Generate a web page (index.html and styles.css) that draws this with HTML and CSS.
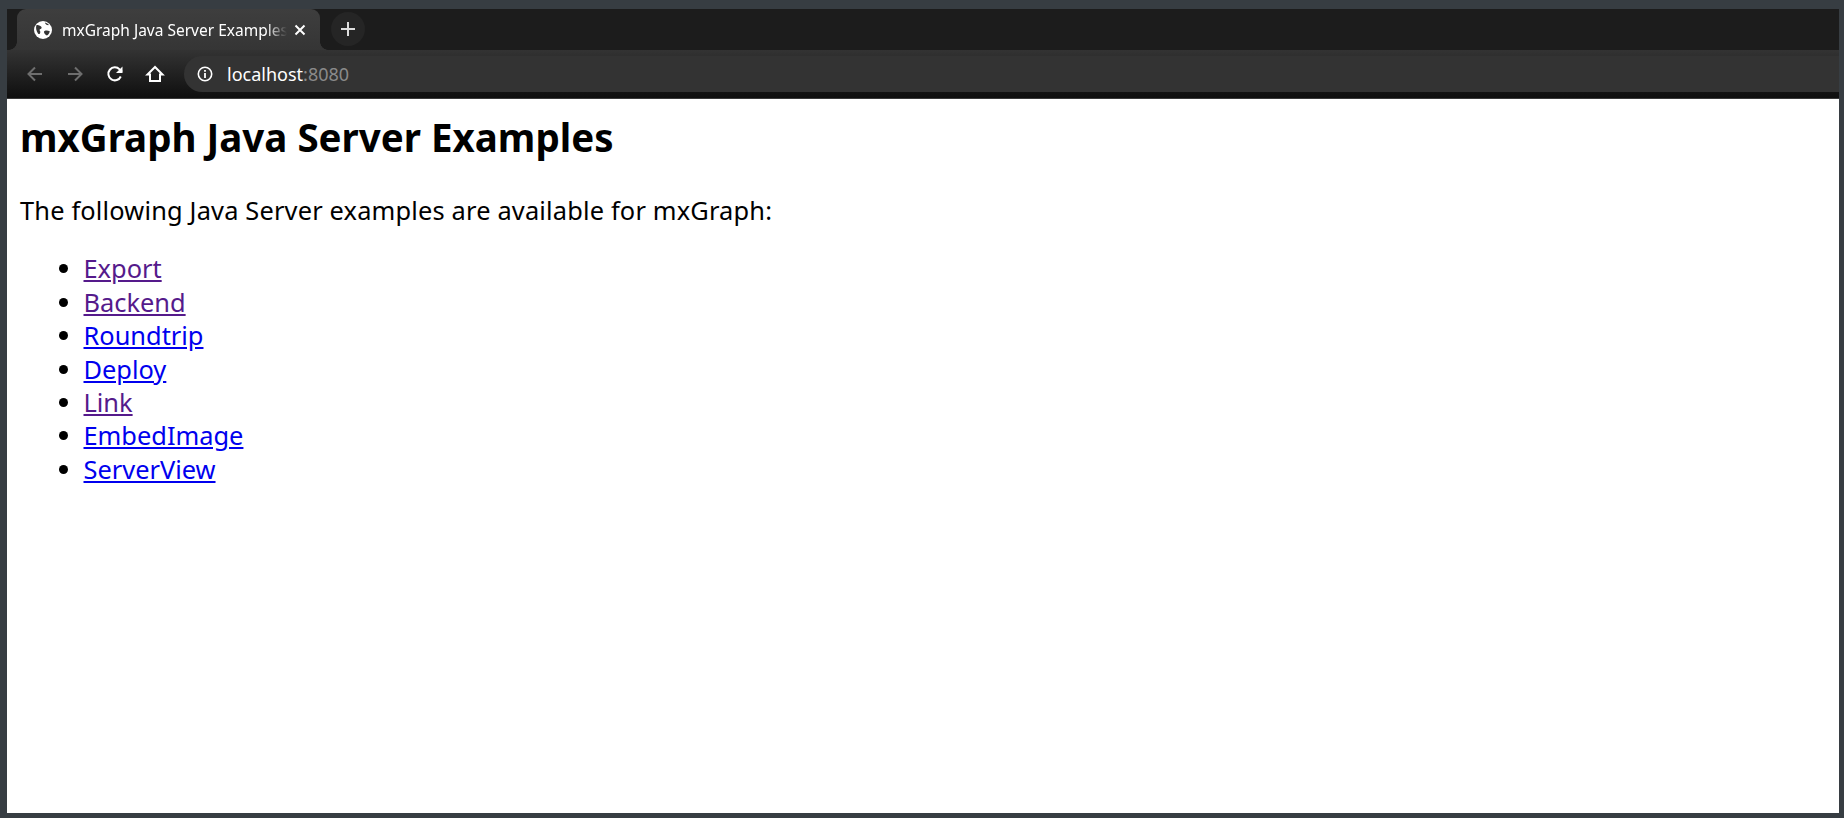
FILE: index.html
```html
<!DOCTYPE html>
<html lang="en">
  <head>
    <meta charset="UTF-8" />
    <title>mxGraph Java Server Examples</title>
    <link rel="stylesheet" href="styles.css">
  </head>
  <body>
    <div class="frame">
      <div class="tabstrip">
        <div class="tab">
          <svg class="globe" width="18" height="18" viewBox="0 0 18 18">
            <circle cx="9" cy="9" r="9" fill="#fff"/>
            <path d="M2.500 4c1.800 0 3.800.6 4.800 1.800.7.9.3 2-.8 2.200-1 .2-1.100 1.200-.5 2 .5.7.4 1.800-.2 2.800-.6.600-1.400.2-2-.6C2.300 10 1.500 6.500 2.500 4zM11 1.500c1.600.4 3 1.300 4 2.600-1 .3-1.800 0-2.500-.4-.8-.5-1.400-1.200-1.500-2.200zM10.500 10c1.600-.8 3.500-.5 5.300.2-.3 1.800-1.300 3.300-2.800 4.400-1.300-.6-2.800-2-3-3.300-.1-.6 0-1 .5-1.300z" fill="#353535"/>
          </svg>
          <span class="tab-title">mxGraph Java Server Examples</span>
          <svg class="tab-close" width="12" height="12" viewBox="0 0 12 12">
            <path d="M1.500 1.500l9 9M10.500 1.500l-9 9" stroke="#fff" stroke-width="2"/>
          </svg>
        </div>
        <div class="newtab">
          <svg width="16" height="16" viewBox="0 0 16 16">
            <path d="M8 1v14M1 8h14" stroke="#ddd" stroke-width="2"/>
          </svg>
        </div>
      </div>
      <div class="toolbar">
        <svg class="nav-icon" width="20" height="20" viewBox="0 0 20 20">
          <path d="M17 10H4M10 3.500L3.500 10l6.500 6.500" fill="none" stroke="#6e6e6e" stroke-width="2"/>
        </svg>
        <svg class="nav-icon" width="20" height="20" viewBox="0 0 20 20">
          <path d="M3 10h13M10 3.500l6.500 6.500-6.500 6.500" fill="none" stroke="#6e6e6e" stroke-width="2"/>
        </svg>
        <svg class="nav-icon" width="20" height="20" viewBox="0 0 20 20">
          <path d="M15.800 12.500A6.500 6.500 0 1 1 14.600 5.400L17 7.800" fill="none" stroke="#fff" stroke-width="2"/>
          <path d="M17.500 2.500v6.500H11z" fill="#fff"/>
        </svg>
        <svg class="nav-icon" width="20" height="20" viewBox="0 0 20 20">
          <path d="M10 3L2.500 10.500H5V17h10v-6.500h2.500z" fill="none" stroke="#fff" stroke-width="2"/>
        </svg>
        <div class="omnibox">
          <svg class="info" width="16" height="16" viewBox="0 0 16 16">
            <circle cx="8" cy="8" r="6.700" fill="none" stroke="#fff" stroke-width="1.600"/>
            <path d="M7.100 4h1.800v1.700H7.100zM7.100 7h1.800v5H7.100z" fill="#fff"/>
          </svg>
          <span class="host">localhost</span><span class="port">:8080</span>
        </div>
      </div>
      <div class="toolbar-edge"></div>
      <div class="page">
        <h1>mxGraph Java Server Examples</h1>
        <p>The following Java Server examples are available for mxGraph:</p>
        <ul>
          <li><a class="visited" href="#">Export</a></li>
          <li><a class="visited" href="#">Backend</a></li>
          <li><a href="#">Roundtrip</a></li>
          <li><a href="#">Deploy</a></li>
          <li><a class="visited" href="#">Link</a></li>
          <li><a href="#">EmbedImage</a></li>
          <li><a href="#">ServerView</a></li>
        </ul>
      </div>
    </div>
  </body>
</html>
```

FILE: styles.css
```css
html, body {
  margin: 0;
  height: 100%;
}
body {
  background-color: #373d42;
  font-family: "Noto Sans", sans-serif;
  overflow: hidden;
}
.frame {
  display: flex;
  flex-direction: column;
  height: 804px;
  margin: 9px 5px 5px 7px;
}
.tabstrip {
  display: flex;
  align-items: flex-end;
  height: 41px;
  padding-left: 10px;
  background-color: #1c1c1c;
}
.tab {
  position: relative;
  display: flex;
  align-items: center;
  flex: none;
  width: 303px;
  height: 41px;
  box-sizing: border-box;
  padding: 0 0 0 17px;
  border-radius: 9px 9px 0 0;
  background: linear-gradient(#3e3e3e, #353535);
}
.tab::before,
.tab::after {
  content: "";
  position: absolute;
  bottom: 0;
  width: 8px;
  height: 8px;
}
.tab::before {
  left: -8px;
  background: radial-gradient(circle at 0 0, transparent 7.500px, #353535 8px);
}
.tab::after {
  right: -8px;
  background: radial-gradient(circle at 100% 0, transparent 7.500px, #353535 8px);
}
.globe {
  flex: none;
}
.tab-title {
  flex: none;
  width: 225px;
  margin: 0 7px 0 4px;
  padding-left: 6px;
  overflow: hidden;
  white-space: nowrap;
  font-size: 15.500px;
  color: #fff;
  -webkit-mask-image: linear-gradient(to right, #000 91%, transparent);
}
.tab-close {
  flex: none;
}
.newtab {
  display: flex;
  align-items: center;
  justify-content: center;
  width: 34px;
  height: 34px;
  margin: 0 0 2px 11px;
  border-radius: 50%;
  background-color: #252525;
  align-self: center;
}
.toolbar {
  display: flex;
  align-items: center;
  height: 48px;
  box-sizing: border-box;
  padding: 6px 0 6px 18px;
  background: linear-gradient(#333, #0f0f0f);
}
.nav-icon {
  flex: none;
  margin-right: 20px;
}
.omnibox {
  display: flex;
  align-items: center;
  flex: 1;
  height: 36px;
  margin-left: -1px;
  padding-left: 13px;
  border-radius: 18px 0 0 18px;
  background-color: #333;
  font-size: 18px;
}
.info {
  margin-right: 14px;
}
.host {
  color: #fff;
}
.port {
  color: #8a8a8a;
}
.toolbar-edge {
  height: 1px;
  background-color: #3a3a3a;
}
.page {
  flex: 1;
  padding: 13px 13px;
  background-color: #fff;
  color: #000;
}
h1 {
  margin: 0;
  font-size: 38.500px;
  line-height: 50px;
  font-weight: 700;
}
p {
  margin: 32px 0 0;
  font-size: 25.400px;
  line-height: 33.400px;
  letter-spacing: 0.170px;
}
ul {
  margin: 25px 0 0;
  padding-left: 63.500px;
  font-size: 25.400px;
  line-height: 33.400px;
}
a {
  color: #0000ee;
}
a.visited {
  color: #551a8b;
}
```
